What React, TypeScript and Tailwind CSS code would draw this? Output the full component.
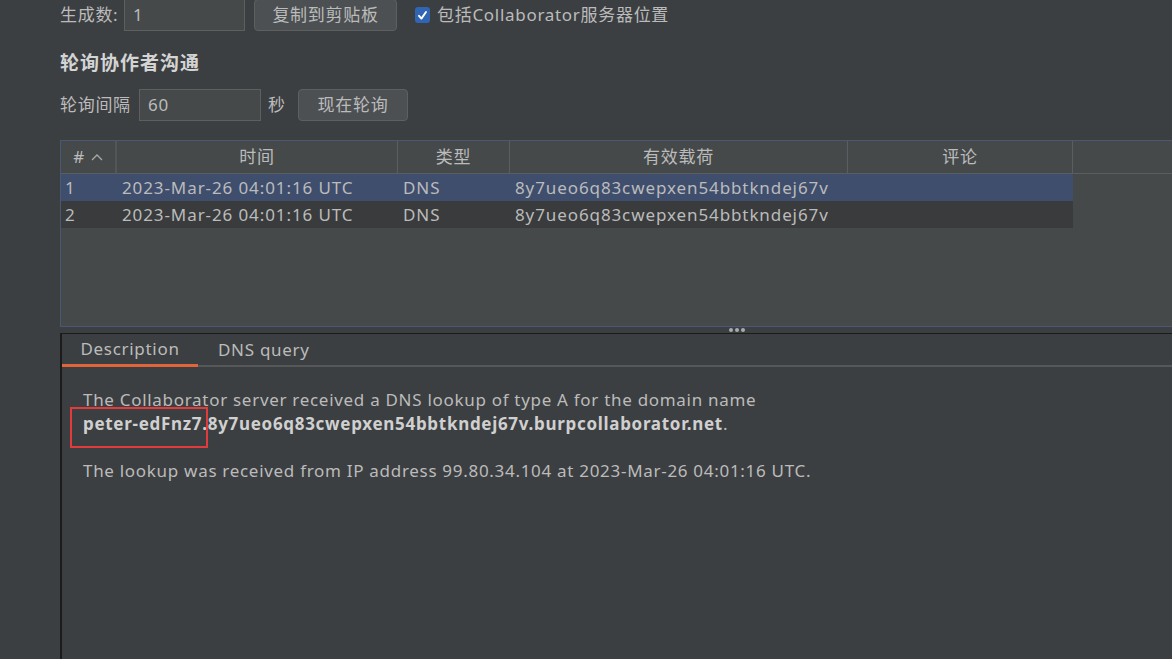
import React from "react";

const font = { fontFamily: '"Noto Sans", "Noto Sans CJK SC", sans-serif' };

const rows = [
  { n: "1", t: "2023-Mar-26 04:01:16 UTC", type: "DNS", p: "8y7ueo6q83cwepxen54bbtkndej67v", sel: true },
  { n: "2", t: "2023-Mar-26 04:01:16 UTC", type: "DNS", p: "8y7ueo6q83cwepxen54bbtkndej67v", sel: false },
];

export default function App() {
  return (
    <div
      className="w-[1172px] h-[659px] overflow-hidden bg-[#3c3f41] text-[#bbbbbb] text-[17px] tracking-[0.7px] flex flex-col"
      style={font}
    >
      {/* top row */}
      <div className="flex items-center pl-[60px] h-[32px] -mt-[1px] shrink-0">
        <span className="w-[64px]">生成数:</span>
        <div className="w-[121px] h-[32px] bg-[#45494a] border border-[#5e6060] flex items-center pl-[8px]">1</div>
        <button className="ml-[9px] w-[143px] h-[32px] rounded-[4px] bg-[#4c5052] border border-[#5e6060] text-[#bbbbbb] tracking-[0.7px]">
          复制到剪贴板
        </button>
        <span className="ml-[18px] w-[15px] h-[16px] rounded-[3px] bg-[#2f65b3] flex items-center justify-center">
          <svg width="11" height="11" viewBox="0 0 11 11">
            <path d="M2 5.8 L4.4 8.6 L9 2" stroke="#ffffff" strokeWidth="1.9" fill="none" strokeLinecap="round" strokeLinejoin="round" />
          </svg>
        </span>
        <span className="ml-[7px]">包括Collaborator服务器位置</span>
      </div>

      {/* heading */}
      <div className="pl-[60px] mt-[19px] h-[26px] flex items-center text-[19px] tracking-[1px] font-bold text-[#d4d4d4] shrink-0">
        轮询协作者沟通
      </div>

      {/* poll row */}
      <div className="flex items-center pl-[60px] mt-[13px] h-[32px] shrink-0">
        <span className="w-[79px]">轮询间隔</span>
        <div className="w-[122px] h-[32px] bg-[#45494a] border border-[#5e6060] flex items-center pl-[8px]">60</div>
        <span className="ml-[7px] w-[30px]">秒</span>
        <button className="w-[110px] h-[32px] rounded-[4px] bg-[#4c5052] border border-[#5e6060] text-[#bbbbbb] tracking-[0.7px]">
          现在轮询
        </button>
      </div>

      {/* table panel */}
      <div className="ml-[60px] mt-[19px] h-[187px] shrink-0 border-t border-b border-l border-[#4a5876] bg-[#45494a] flex flex-col">
        <div className="h-[33px] flex border-b border-[#5b5e60] text-[#bbbbbb]">
          <div className="w-[56px] flex items-center justify-center gap-[6px] border-r-2 border-[#535658]">
            <span>#</span>
            <svg width="12" height="8" viewBox="0 0 12 8">
              <path d="M1 7 L6 2 L11 7" stroke="#a9a9a9" strokeWidth="1.3" fill="none" />
            </svg>
          </div>
          <div className="w-[281px] flex items-center justify-center border-r border-[#5b5e60]">时间</div>
          <div className="w-[112px] flex items-center justify-center border-r border-[#5b5e60]">类型</div>
          <div className="w-[338px] flex items-center justify-center border-r border-[#5b5e60]">有效载荷</div>
          <div className="w-[225px] flex items-center justify-center border-r border-[#5b5e60]">评论</div>
          <div className="flex-1" />
        </div>
        {rows.map((r) => (
          <div
            key={r.n}
            className={`w-[1012px] h-[27px] flex items-center tracking-[0.9px] ${r.sel ? "bg-[#3f4e6d]" : "bg-[#393b3d]"}`}
          >
            <div className="w-[56px] pl-[4px]">{r.n}</div>
            <div className="w-[281px] pl-[5px]">{r.t}</div>
            <div className="w-[112px] pl-[5px]">{r.type}</div>
            <div className="w-[338px] pl-[5px]">{r.p}</div>
            <div className="w-[225px]" />
          </div>
        ))}
      </div>

      {/* splitter */}
      <div className="h-[6px] shrink-0 flex items-center pl-[729px]">
        <div className="flex gap-[2px]">
          <span className="w-[4px] h-[4px] rounded-full bg-[#a9abad]" />
          <span className="w-[4px] h-[4px] rounded-full bg-[#a9abad]" />
          <span className="w-[4px] h-[4px] rounded-full bg-[#a9abad]" />
        </div>
      </div>

      {/* bottom panel */}
      <div className="ml-[60px] flex-1 border-t border-l-2 border-[#1b1b1b] flex flex-col">
        <div className="h-[33px] flex shrink-0 border-b-2 border-[#555759]">
          <div className="w-[136px] flex items-center justify-center border-b-[3px] border-[#e0653a] -mb-[2px]">
            Description
          </div>
          <div className="pl-[20px] flex items-center">DNS query</div>
        </div>
        <div className="pl-[21px] pt-[21px] leading-[24px]">
          <div>The Collaborator server received a DNS lookup of type A for the domain name</div>
          <div className="relative">
            <span className="font-bold text-[#d0d0d0]">peter-edFnz7.8y7ueo6q83cwepxen54bbtkndej67v.burpcollaborator.net</span>
            <span>.</span>
            <span className="absolute -left-[13px] -top-[5px] w-[138px] h-[41px] border-2 border-[#e23b3b]" />
          </div>
          <div className="mt-[23px]">The lookup was received from IP address 99.80.34.104 at 2023-Mar-26 04:01:16 UTC.</div>
        </div>
      </div>
    </div>
  );
}
